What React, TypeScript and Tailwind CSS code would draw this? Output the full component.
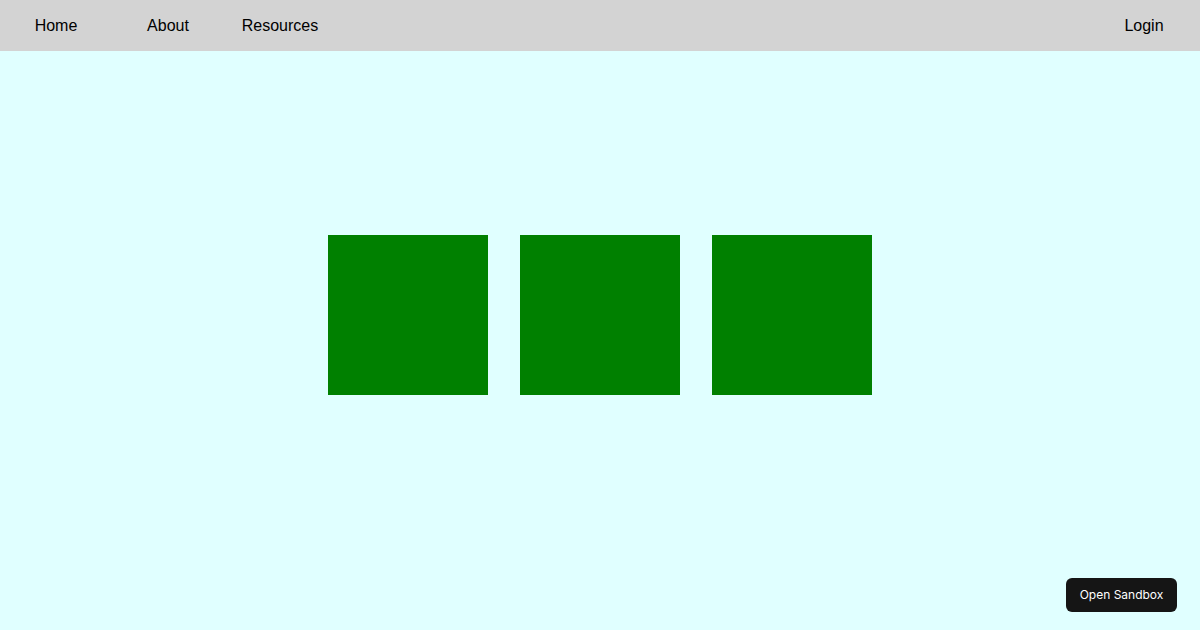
const links = ['Home', 'About', 'Resources'];

export default function App() {
  return (
    <div className="relative h-[630px] w-[1200px] overflow-hidden bg-[#e0ffff] font-['Liberation_Sans',Arial,sans-serif] text-black">
      <nav className="flex h-[51px] items-center justify-between bg-[#d3d3d3] text-base">
        <div className="flex">
          {links.map((l) => (
            <a key={l} className="w-[112px] text-center">
              {l}
            </a>
          ))}
        </div>
        <a className="w-[112px] text-center">Login</a>
      </nav>
      <main className="flex justify-center gap-8 pt-[184px]">
        <div className="h-40 w-40 bg-[#008000]" />
        <div className="h-40 w-40 bg-[#008000]" />
        <div className="h-40 w-40 bg-[#008000]" />
      </main>
      <button
        type="button"
        className="absolute bottom-[18px] right-[23px] h-[34px] w-[111px] rounded-md bg-[#151515] font-['Inter',sans-serif] text-[12px] text-white"
      >
        Open Sandbox
      </button>
    </div>
  );
}
